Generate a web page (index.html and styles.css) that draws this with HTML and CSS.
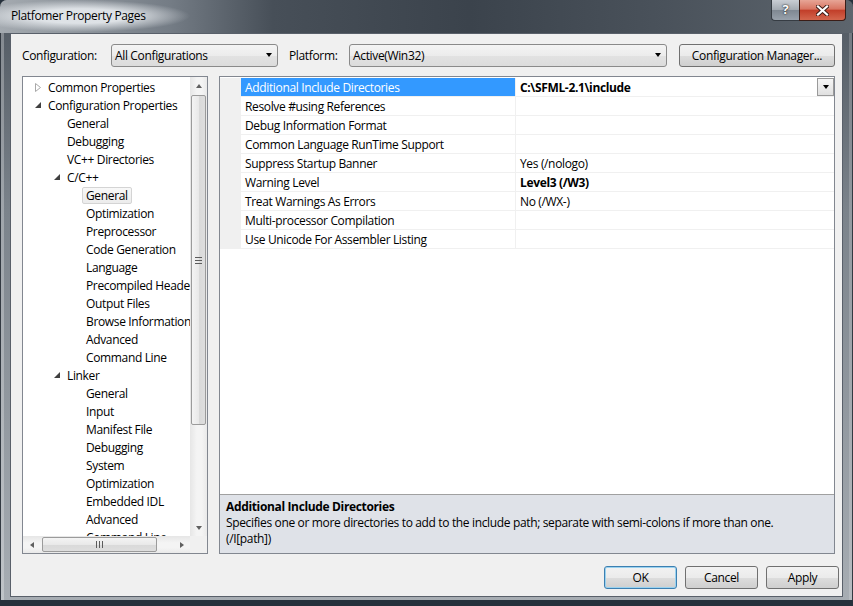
FILE: index.html
```html
<!DOCTYPE html>
<html lang="en">
<head>
    <meta charset="UTF-8">
    <title>Platfomer Property Pages</title>
    <link rel="stylesheet" href="styles.css">
</head>
<body>
    <div class="window">
        <div class="titlebar">
            <span class="title">Platfomer Property Pages</span>
            <div class="caption-btns">
                <div class="cap-help">?</div>
                <div class="cap-close">
                    <svg width="13" height="11" viewBox="0 0 13 11">
                        <path d="M2 1.5 L11 9.5 M11 1.5 L2 9.5" stroke="#3b1a14" stroke-width="4" stroke-linecap="square"/>
                        <path d="M2 1.5 L11 9.5 M11 1.5 L2 9.5" stroke="#fff" stroke-width="2.2" stroke-linecap="square"/>
                    </svg>
                </div>
            </div>
        </div>

        <div class="client">
            <!-- configuration / platform selectors -->
            <div class="config-bar">
                <span class="lbl lbl-config">Configuration:</span>
                <div class="combo combo-config"><span>All Configurations</span><i class="combo-arrow"></i></div>
                <span class="lbl lbl-platform">Platform:</span>
                <div class="combo combo-platform"><span>Active(Win32)</span><i class="combo-arrow"></i></div>
                <button class="btn btn-manager">Configuration Manager...</button>
            </div>

            <div class="main">
                <!-- left tree -->
                <div class="tree-panel">
                    <div class="tree-body">
                        <ul class="tree">
                            <li class="l0"><span class="exp"><svg width="6" height="9"><path d="M0.5 0.5 L5.5 4.5 L0.5 8.5 Z" fill="#fff" stroke="#a8a8a8"/></svg></span>Common Properties</li>
                            <li class="l0"><span class="exp"><svg width="6" height="6"><path d="M6 0 L6 6 L0 6 Z" fill="#404040"/></svg></span>Configuration Properties</li>
                            <li class="l1"><span class="exp"></span>General</li>
                            <li class="l1"><span class="exp"></span>Debugging</li>
                            <li class="l1"><span class="exp"></span>VC++ Directories</li>
                            <li class="l1"><span class="exp"><svg width="6" height="6"><path d="M6 0 L6 6 L0 6 Z" fill="#404040"/></svg></span>C/C++</li>
                            <li class="l2"><span class="exp"></span><span class="sel">General</span></li>
                            <li class="l2"><span class="exp"></span>Optimization</li>
                            <li class="l2"><span class="exp"></span>Preprocessor</li>
                            <li class="l2"><span class="exp"></span>Code Generation</li>
                            <li class="l2"><span class="exp"></span>Language</li>
                            <li class="l2"><span class="exp"></span>Precompiled Headers</li>
                            <li class="l2"><span class="exp"></span>Output Files</li>
                            <li class="l2"><span class="exp"></span>Browse Information</li>
                            <li class="l2"><span class="exp"></span>Advanced</li>
                            <li class="l2"><span class="exp"></span>Command Line</li>
                            <li class="l1"><span class="exp"><svg width="6" height="6"><path d="M6 0 L6 6 L0 6 Z" fill="#404040"/></svg></span>Linker</li>
                            <li class="l2"><span class="exp"></span>General</li>
                            <li class="l2"><span class="exp"></span>Input</li>
                            <li class="l2"><span class="exp"></span>Manifest File</li>
                            <li class="l2"><span class="exp"></span>Debugging</li>
                            <li class="l2"><span class="exp"></span>System</li>
                            <li class="l2"><span class="exp"></span>Optimization</li>
                            <li class="l2"><span class="exp"></span>Embedded IDL</li>
                            <li class="l2"><span class="exp"></span>Advanced</li>
                            <li class="l2"><span class="exp"></span>Command Line</li>
                        </ul>
                        <div class="vscroll">
                            <div class="sb-btn"><i class="tri-up"></i></div>
                            <div class="vtrack">
                                <div class="vthumb"><i class="grip-h"></i></div>
                            </div>
                            <div class="sb-btn"><i class="tri-down"></i></div>
                        </div>
                    </div>
                    <div class="hscroll-row">
                        <div class="hscroll">
                            <div class="sb-btn"><i class="tri-left"></i></div>
                            <div class="htrack">
                                <div class="hthumb"><i class="grip-v"></i></div>
                            </div>
                            <div class="sb-btn"><i class="tri-right"></i></div>
                        </div>
                        <div class="sb-corner"></div>
                    </div>
                </div>

                <!-- property grid -->
                <div class="prop-panel">
                    <div class="grid">
                        <div class="row selected">
                            <div class="gutter"></div>
                            <div class="name">Additional Include Directories</div>
                            <div class="value bold">C:\SFML-2.1\include<span class="drop-btn"><i class="combo-arrow"></i></span></div>
                        </div>
                        <div class="row">
                            <div class="gutter"></div>
                            <div class="name">Resolve #using References</div>
                            <div class="value"></div>
                        </div>
                        <div class="row">
                            <div class="gutter"></div>
                            <div class="name">Debug Information Format</div>
                            <div class="value"></div>
                        </div>
                        <div class="row">
                            <div class="gutter"></div>
                            <div class="name">Common Language RunTime Support</div>
                            <div class="value"></div>
                        </div>
                        <div class="row">
                            <div class="gutter"></div>
                            <div class="name">Suppress Startup Banner</div>
                            <div class="value">Yes (/nologo)</div>
                        </div>
                        <div class="row">
                            <div class="gutter"></div>
                            <div class="name">Warning Level</div>
                            <div class="value bold">Level3 (/W3)</div>
                        </div>
                        <div class="row">
                            <div class="gutter"></div>
                            <div class="name">Treat Warnings As Errors</div>
                            <div class="value">No (/WX-)</div>
                        </div>
                        <div class="row">
                            <div class="gutter"></div>
                            <div class="name">Multi-processor Compilation</div>
                            <div class="value"></div>
                        </div>
                        <div class="row">
                            <div class="gutter"></div>
                            <div class="name">Use Unicode For Assembler Listing</div>
                            <div class="value"></div>
                        </div>
                    </div>
                    <div class="desc">
                        <div class="desc-title">Additional Include Directories</div>
                        <div class="desc-text">Specifies one or more directories to add to the include path; separate with semi-colons if more than one.<br>(/I[path])</div>
                    </div>
                </div>
            </div>

            <div class="footer">
                <button class="btn btn-ok">OK</button>
                <button class="btn">Cancel</button>
                <button class="btn">Apply</button>
            </div>
        </div>
    </div>
</body>
</html>
```

FILE: styles.css
```css
* {
    box-sizing: border-box;
}

body {
    margin: 0;
    width: 853px;
    height: 606px;
    overflow: hidden;
    background: #26313c;
    font-family: "Open Sans", "Segoe UI", sans-serif;
    font-size: 12px;
    letter-spacing: -0.35px;
    color: #000;
}

/* Aero window frame */
.window {
    height: 600px;
    display: flex;
    flex-direction: column;
    border-radius: 7px 7px 0 0;
    background: linear-gradient(180deg, #4f5760 0, #7b838b 35%, #a7adb3 100%);
    box-shadow: inset 1px 0 0 #333a42, inset -1px 0 0 #333a42,
                inset 4px 0 0 rgba(255, 255, 255, 0.28), inset -4px 0 0 rgba(255, 255, 255, 0.18);
}

.titlebar {
    height: 33px;
    display: flex;
    align-items: flex-start;
    border-radius: 7px 7px 0 0;
    background:
        radial-gradient(ellipse 110px 16px at 80px 16px, rgba(226, 230, 234, 0.95) 45%, rgba(226, 230, 234, 0) 100%),
        linear-gradient(90deg, #a4aab0 0, #747c85 20%, #474f58 32%, #3b434c 55%, #4a525b 78%, #5d656d 100%);
}

.title {
    padding-left: 11px;
    line-height: 32px;
    color: #000;
}

.caption-btns {
    display: flex;
    margin-left: auto;
    margin-right: 7px;
}

.cap-help {
    width: 28px;
    height: 21px;
    border: 1px solid #363c43;
    border-top: none;
    border-right: none;
    border-radius: 0 0 0 4px;
    background: linear-gradient(180deg, #c9ced4 0, #a4abb3 48%, #7f8892 52%, #98a1ab 100%);
    color: #fff;
    font-weight: bold;
    font-size: 13px;
    text-align: center;
    line-height: 19px;
    text-shadow: 0 0 2px #222, 0 0 1px #222;
}

.cap-close {
    width: 47px;
    height: 21px;
    border: 1px solid #3a1d17;
    border-top: none;
    border-radius: 0 0 4px 0;
    background: linear-gradient(180deg, #e7a596 0, #d87562 45%, #c23f2a 52%, #d3664d 100%);
    display: flex;
    align-items: center;
    justify-content: center;
}

/* dialog client area */
.client {
    flex: 1;
    margin: 0 10px 3px;
    padding: 9px 7px 0 11px;
    background: #f0f0f0;
    border: 1px solid #59606a;
    display: flex;
    flex-direction: column;
}

.config-bar {
    height: 24px;
    display: flex;
    align-items: center;
}

.lbl-config {
    width: 89px;
}

.lbl-platform {
    width: 60px;
    margin-left: 11px;
}

.combo {
    height: 23px;
    border: 1px solid #8a8a8a;
    border-radius: 3px;
    background: linear-gradient(180deg, #f4f4f4 0, #ececec 50%, #e2e2e2 51%, #dcdcdc 100%);
    display: flex;
    align-items: center;
    padding: 0 5px 0 3px;
}

.combo-config {
    width: 167px;
}

.combo-platform {
    width: 318px;
}

.combo-arrow {
    margin-left: auto;
    width: 0;
    height: 0;
    border-left: 3.5px solid transparent;
    border-right: 3.5px solid transparent;
    border-top: 4px solid #000;
}

.btn {
    height: 23px;
    border: 1px solid #707070;
    border-radius: 3px;
    background: linear-gradient(180deg, #f2f2f2 0, #ebebeb 50%, #dddddd 51%, #cfcfcf 100%);
    font-family: inherit;
    font-size: 12px;
    letter-spacing: -0.35px;
    color: #000;
    padding: 0;
}

.btn-manager {
    width: 156px;
    margin-left: 12px;
}

/* main panels */
.main {
    margin-top: 9px;
    height: 478px;
    display: flex;
    gap: 11px;
}

.tree-panel {
    width: 186px;
    border: 1px solid #828790;
    background: #fff;
    display: flex;
    flex-direction: column;
}

.tree-body {
    height: 459px;
    display: flex;
}

.tree {
    flex: 1;
    min-width: 0;
    margin: 0;
    padding: 1px 0 0;
    list-style: none;
    overflow: hidden;
}

.tree li {
    height: 18px;
    display: flex;
    align-items: center;
    white-space: nowrap;
}

.tree .l0 {
    padding-left: 6px;
}

.tree .l1 {
    padding-left: 25px;
}

.tree .l2 {
    padding-left: 44px;
}

.exp {
    width: 19px;
    flex: none;
    display: flex;
    align-items: center;
    padding-left: 6px;
}

.exp svg {
    display: block;
}

.sel {
    margin-left: -4px;
    padding: 0 3px;
    height: 17px;
    line-height: 15px;
    border: 1px solid #d4d4d4;
    border-radius: 2px;
    background: linear-gradient(180deg, #f8f8f8, #ececec);
}

/* scrollbars */
.vscroll {
    width: 17px;
    display: flex;
    flex-direction: column;
    background: linear-gradient(90deg, #e6e6e6, #f4f4f4 40%, #f4f4f4 70%, #e9e9e9);
}

.sb-btn {
    width: 17px;
    height: 17px;
    flex: none;
    display: flex;
    align-items: center;
    justify-content: center;
}

.vtrack {
    flex: 1;
    padding: 1px 1px 0;
}

.vthumb {
    height: 330px;
    border: 1px solid #9b9b9b;
    border-radius: 2px;
    background: linear-gradient(90deg, #f4f4f4 0, #e9e9e9 50%, #d9d9d9 51%, #dedede 100%);
    display: flex;
    align-items: center;
    justify-content: center;
}

.grip-h {
    width: 7px;
    height: 7px;
    border-top: 1px solid #5c5c5c;
    border-bottom: 1px solid #5c5c5c;
    background: linear-gradient(180deg, transparent 2px, #5c5c5c 2px, #5c5c5c 3px, transparent 3px);
}

.hscroll-row {
    height: 17px;
    display: flex;
}

.hscroll {
    flex: 1;
    display: flex;
    background: linear-gradient(180deg, #e6e6e6, #f4f4f4 40%, #f4f4f4 70%, #e9e9e9);
}

.htrack {
    flex: 1;
    padding: 1px 0 0 2px;
}

.hthumb {
    width: 115px;
    height: 15px;
    border: 1px solid #9b9b9b;
    border-radius: 2px;
    background: linear-gradient(180deg, #f4f4f4 0, #e9e9e9 50%, #d9d9d9 51%, #dedede 100%);
    display: flex;
    align-items: center;
    justify-content: center;
}

.grip-v {
    width: 7px;
    height: 7px;
    border-left: 1px solid #5c5c5c;
    border-right: 1px solid #5c5c5c;
    background: linear-gradient(90deg, transparent 2px, #5c5c5c 2px, #5c5c5c 3px, transparent 3px);
}

.sb-corner {
    width: 17px;
    background: #f0f0f0;
}

.tri-up, .tri-down, .tri-left, .tri-right {
    width: 0;
    height: 0;
    border: 3.5px solid transparent;
}

.tri-up {
    border-bottom: 4px solid #606060;
    border-top: none;
}

.tri-down {
    border-top: 4px solid #606060;
    border-bottom: none;
}

.tri-left {
    border-right: 4px solid #606060;
    border-left: none;
}

.tri-right {
    border-left: 4px solid #606060;
    border-right: none;
}

/* property grid */
.prop-panel {
    flex: 1;
    border: 1px solid #828790;
    display: flex;
    flex-direction: column;
}

.grid {
    height: 417px;
    padding-top: 1px;
    background: #fff;
}

.row {
    height: 19px;
    display: flex;
    border-bottom: 1px solid #f0f0f0;
}

.gutter {
    width: 21px;
    background: #f0f0f0;
}

.name {
    width: 275px;
    padding-left: 4px;
    line-height: 20px;
    border-right: 1px solid #f0f0f0;
    white-space: nowrap;
}

.row.selected .name {
    background: #3399ff;
    color: #fff;
}

.value {
    flex: 1;
    display: flex;
    align-items: center;
    padding: 1px 0 0 4px;
}

.bold {
    font-weight: bold;
}

.drop-btn {
    margin-left: auto;
    margin-top: -1px;
    width: 17px;
    height: 18px;
    border: 1px solid #9a9a9a;
    background: linear-gradient(180deg, #f6f6f6, #e0e0e0);
    display: flex;
    align-items: center;
    justify-content: center;
}

.drop-btn .combo-arrow {
    margin-left: 0;
}

.desc {
    flex: 1;
    background: #dfe2e8;
    border-top: 1px solid #a0a0a0;
    padding: 4px 6px 0;
    line-height: 16px;
}

.desc-title {
    font-weight: bold;
}

/* dialog buttons */
.footer {
    margin-top: 12px;
    margin-right: -4px;
    display: flex;
    justify-content: flex-end;
    gap: 8px;
}

.footer .btn {
    width: 73px;
}

.btn-ok {
    border-color: #3c7fb1;
    box-shadow: inset 0 0 0 1px #9ad2ef;
}
```
